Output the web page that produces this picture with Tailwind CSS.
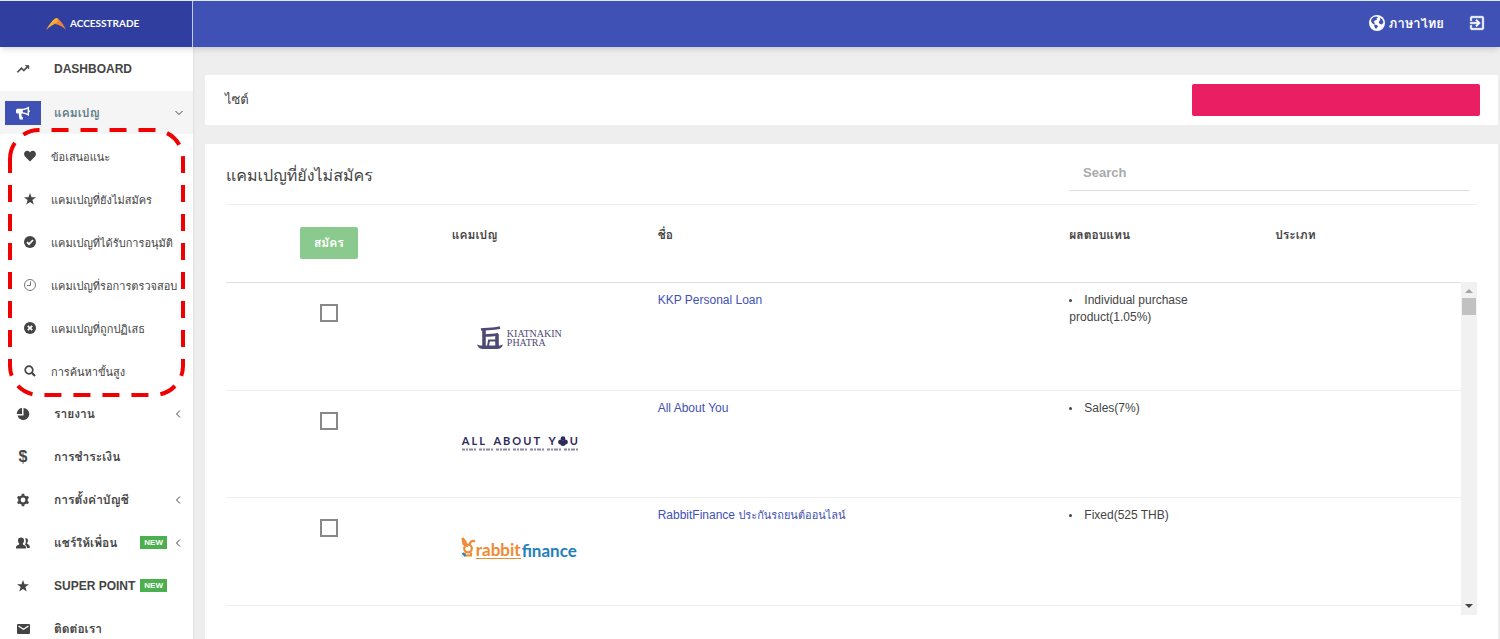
<!DOCTYPE html>
<html lang="th">
<head>
    <meta charset="UTF-8">
    <meta name="viewport" content="width=device-width, initial-scale=1.0">
    <title>ACCESSTRADE</title>
    <script src="https://cdn.jsdelivr.net/npm/@tailwindcss/browser@4"></script>
</head>
<body class="bg-[#eeeeee] font-['Liberation_Sans',Loma,'Noto_Sans_Thai_Looped',sans-serif] text-xs text-[#444] antialiased">
    <div class="flex h-screen flex-col overflow-hidden border-t border-[#dfe7f5]">

        <!-- Header -->
        <header class="relative z-10 flex h-[46px] shrink-0 bg-[#3f51b5] text-white shadow-md">
            <a href="#" class="flex w-[193px] items-center gap-1 border-r border-[#c5cae9] bg-[#303f9f] pl-[46px]">
                <svg class="h-3 w-5" viewBox="0 0 20 12">
                    <path d="M0 12C3 7 6 3 9 .6 10 -.2 11 -.2 12 .6L14 4.500C9 5 4 8 0 12z" fill="#fbb034"/>
                    <path d="M11 0c4 3 7 7 9 12-4-4-8-6-14-6.500 3 0 5-1 6-2z" fill="#f0803c"/>
                </svg>
                <span class="font-[Lato] text-[10px] font-bold">ACCESSTRADE</span>
            </a>
            <div class="flex flex-1 items-center justify-end gap-6 pr-[14px] pb-[2px]">
                <a href="#" class="flex items-center gap-1 text-[13px] font-bold">
                    <svg class="h-4 w-4" viewBox="0 0 16 16">
                        <circle cx="8" cy="8" r="8" fill="#fff"/>
                        <path d="M2.500 4l2-2 3-.5 1.500 1-1.500 1 .5 1-2 1-1.500 1.500 1.500 1-1 1.500-2-1.500L2 6zM11 2.500l2.500 2 1 3-1.800 2-2-.5-1-2 1.500-2zM5 9.500l3 .5 1 1.500-2 2.500L5.500 12z" fill="#3f51b5"/>
                    </svg>
                    <span class="pt-[2px]">ภาษาไทย</span>
                </a>
                <button type="button" aria-label="ออกจากระบบ">
                    <svg class="h-[18px] w-[18px]" viewBox="0 0 24 24" fill="#fff" stroke="#fff" stroke-width=".7"><path d="M10.090 15.590L11.500 17l5-5-5-5-1.410 1.410L12.670 11H3v2h9.670l-2.580 2.590zM19 3H5c-1.110 0-2 .9-2 2v4h2V5h14v14H5v-4H3v4c0 1.100.89 2 2 2h14c1.100 0 2-.9 2-2V5c0-1.100-.9-2-2-2z"/></svg>
                </button>
            </div>
        </header>

        <div class="flex min-h-0 flex-1">

            <!-- Sidebar -->
            <nav class="w-[193px] shrink-0 bg-white font-bold shadow">
                <a href="#" class="flex h-11 items-center">
                    <span class="ml-[5px] flex w-9 justify-center"><svg class="h-[14px] w-[14px]" viewBox="0 0 24 24" fill="#444" stroke="#444"><path d="M16 6l2.290 2.290-4.880 4.880-4-4L2 16.590 3.410 18l6-6 4 4 6.300-6.290L22 12V6z"/></svg></span>
                    <span class="ml-[13px]">DASHBOARD</span>
                </a>
                <a href="#" class="flex h-[43px] items-center bg-[#f5f5f5] text-[#607d8b]">
                    <span class="ml-[5px] flex h-6 w-9 items-center justify-center bg-[#3f51b5]"><svg class="h-[14px] w-[14px]" viewBox="0 0 14 14" fill="#fff"><path d="M13 .5v9.500C10.500 8.300 8 7.600 6 7.500c-.8.400-.8 1.200-.2 1.800-.5.800.1 1.500 1.200 2.400v1.800H3.700c-.6-1.700-1-3.600-.8-6H1.500A1.500 1.500 0 0 1 0 5.900V4.300A1.500 1.500 0 0 1 1.500 2.800H5.500C8 2.800 10.500 2 13 .5z"/><path d="M6.700 4.200C8.700 4 10.300 3.400 11.600 2.700v5C10.300 7 8.700 6.500 6.700 6.300z" fill="#3f51b5"/><circle cx="13" cy="5.200" r="1"/></svg></span>
                    <span class="ml-[13px] flex-1">แคมเปญ</span>
                    <svg class="mr-[10px] h-2 w-2" viewBox="0 0 8 8" fill="none" stroke="#444"><path d="M.5 2L4 5.500 7.500 2"/></svg>
                </a>

                <div class="relative text-[11px] font-normal">
                    <a href="#" class="flex h-[43px] items-center">
                        <svg class="ml-6 h-3 w-3" viewBox="0 0 12 12" fill="#444"><path d="M6 11.500L1 6.500C-1 4 .5 .8 3.200 .8 4.500 .8 5.500 1.500 6 2.500 6.500 1.500 7.500 .8 8.800 .8 11.500 .8 13 4 11 6.500z"/></svg>
                        <span class="ml-[15px] pt-1">ข้อเสนอแนะ</span>
                    </a>
                    <a href="#" class="flex h-[43px] items-center">
                        <svg class="ml-6 h-3 w-3" viewBox="0 0 12 12" fill="#444"><path d="M6 0l1.500 4.300H12L8.400 7l1.300 4.600L6 8.900l-3.700 2.700L3.600 7 0 4.300h4.500z"/></svg>
                        <span class="ml-[15px] pt-1">แคมเปญที่ยังไม่สมัคร</span>
                    </a>
                    <a href="#" class="flex h-[43px] items-center">
                        <svg class="ml-6 h-3 w-3" viewBox="0 0 12 12"><circle cx="6" cy="6" r="6" fill="#444"/><path d="M3 6.200l2 2L9 4" fill="none" stroke="#fff" stroke-width="1.800"/></svg>
                        <span class="ml-[15px] pt-1 whitespace-nowrap">แคมเปญที่ได้รับการอนุมัติ</span>
                    </a>
                    <a href="#" class="flex h-[43px] items-center">
                        <svg class="ml-6 h-3 w-3" viewBox="0 0 12 12" fill="none" stroke="#777"><circle cx="6" cy="6" r="5.500"/><path d="M6.500 2.500V6.500H3"/></svg>
                        <span class="ml-[15px] pt-1 whitespace-nowrap">แคมเปญที่รอการตรวจสอบ</span>
                    </a>
                    <a href="#" class="flex h-[43px] items-center">
                        <svg class="ml-6 h-3 w-3" viewBox="0 0 12 12"><circle cx="6" cy="6" r="6" fill="#444"/><path d="M3.800 3.800l4.400 4.400M8.200 3.800L3.800 8.200" stroke="#fff" stroke-width="1.800"/></svg>
                        <span class="ml-[15px] pt-1">แคมเปญที่ถูกปฏิเสธ</span>
                    </a>
                    <a href="#" class="flex h-[43px] items-center">
                        <svg class="ml-6 h-3 w-3" viewBox="0 0 12 12" fill="none" stroke="#444"><circle cx="5" cy="5" r="3.800" stroke-width="1.700"/><path d="M7.800 7.800L11 11" stroke-width="2.200"/></svg>
                        <span class="ml-[15px] pt-1">การค้นหาขั้นสูง</span>
                    </a>
                    <!-- highlight around the submenu -->
                    <svg class="pointer-events-none absolute -top-[6px] left-[8px] h-[270px] w-[178px]" viewBox="0 0 178 270" fill="none">
                        <path d="M2 31A29 29 0 0 1 31 2H146A29 29 0 0 1 175 31V238A29 29 0 0 1 146 267H31A29 29 0 0 1 2 238z" stroke="#f00000" stroke-width="4" stroke-dasharray="17 12"/>
                    </svg>
                </div>

                <a href="#" class="flex h-[43px] items-center">
                    <span class="ml-[5px] flex w-9 justify-center"><svg class="h-[14px] w-[14px]" viewBox="0 0 14 14" fill="#444"><path d="M7.500 1a6 6 0 1 1-6 7.500H7.500z"/><path d="M6 .8V7H.8A6 6 0 0 1 6 .8z"/></svg></span>
                    <span class="ml-[13px] flex-1">รายงาน</span>
                    <svg class="mr-[11px] h-2 w-2" viewBox="0 0 8 8" fill="none" stroke="#444"><path d="M6 .5L2.500 4 6 7.500"/></svg>
                </a>
                <a href="#" class="flex h-[43px] items-center">
                    <span class="ml-[5px] flex w-9 justify-center text-base">$</span>
                    <span class="ml-[13px]">การชำระเงิน</span>
                </a>
                <a href="#" class="flex h-[43px] items-center">
                    <span class="ml-[5px] flex w-9 justify-center"><svg class="h-[14px] w-[14px]" viewBox="0 0 14 14"><circle cx="7" cy="7" r="3.600" fill="none" stroke="#444" stroke-width="2.400"/><path d="M7 .8v2M7 11.200v2M1.600 3.900l1.800 1M10.600 9.100l1.800 1M1.600 10.100l1.800-1M10.600 4.900l1.800-1" stroke="#444" stroke-width="2.600"/></svg></span>
                    <span class="ml-[13px] flex-1">การตั้งค่าบัญชี</span>
                    <svg class="mr-[11px] h-2 w-2" viewBox="0 0 8 8" fill="none" stroke="#444"><path d="M6 .5L2.500 4 6 7.500"/></svg>
                </a>
                <a href="#" class="flex h-[43px] items-center">
                    <span class="ml-[5px] flex w-9 justify-center"><svg class="h-[14px] w-[14px]" viewBox="0 0 14 14" fill="#444"><path d="M9 2.500c1.500-.6 3 .3 3 2 0 1.300-.5 2-1 2.600.2 1.500 2.500 1.500 2.800 3.400V12H11c0-1.800-.9-2.500-2-3.200C10 7 10.300 4 9 2.500z"/><path d="M5 1.500c2 0 3 1.200 3 3C8 6 7.400 7 6.700 7.700c.2 1.500 3.100 1.500 3.300 3.300v1.500H0V11C.2 9.200 3.100 9.200 3.300 7.700 2.600 7 2 6 2 4.500c0-1.800 1-3 3-3z"/></svg></span>
                    <span class="ml-[13px] flex-1">แชร์ให้เพื่อน</span>
                    <span class="bg-[#4caf50] px-1 text-[8px] leading-[13px] text-white">NEW</span>
                    <svg class="mr-[11px] ml-[7px] h-2 w-2" viewBox="0 0 8 8" fill="none" stroke="#444"><path d="M6 .5L2.500 4 6 7.500"/></svg>
                </a>
                <a href="#" class="flex h-[43px] items-center">
                    <span class="ml-[5px] flex w-9 justify-center"><svg class="h-3 w-3" viewBox="0 0 12 12" fill="#444"><path d="M6 0l1.500 4.300H12L8.400 7l1.300 4.600L6 8.900l-3.700 2.700L3.600 7 0 4.300h4.500z"/></svg></span>
                    <span class="ml-[13px] flex-1 whitespace-nowrap">SUPER POINT</span>
                    <span class="mr-[26px] bg-[#4caf50] px-1 text-[8px] leading-[13px] text-white">NEW</span>
                </a>
                <a href="#" class="flex h-[43px] items-center">
                    <span class="ml-[5px] flex w-9 justify-center"><svg class="h-[10px] w-[13px]" viewBox="0 0 13 10"><rect width="13" height="10" rx="1" fill="#444"/><path d="M1.500 2l5 3.300 5-3.300" fill="none" stroke="#fff" stroke-width="1.200"/></svg></span>
                    <span class="ml-[13px]">ติดต่อเรา</span>
                </a>
            </nav>

            <!-- Content -->
            <main class="flex min-w-0 flex-1 flex-col pt-7 pr-[2px] pl-3">
                <section class="flex h-[50px] shrink-0 items-center justify-between bg-white pr-[18px] pl-5">
                    <h2 class="text-[13px]">ไซต์</h2>
                    <button type="button" aria-label="เลือกไซต์" class="h-8 w-72 rounded-xs bg-[#e91e63]"></button>
                </section>

                <section class="mt-[19px] flex-1 bg-white pr-[21px] pl-[21px]">
                    <div class="flex h-[61px] items-start justify-between border-b border-[#f0f0f0] pr-2">
                        <h1 class="pt-5 text-base">แคมเปญที่ยังไม่สมัคร</h1>
                        <input type="search" aria-label="Search" placeholder="Search" class="h-[47px] w-[400px] border-b border-[#dcdcdc] px-[14px] pt-[11px] text-[13px] font-bold outline-none placeholder:text-[#aaa]">
                    </div>

                    <div class="flex">
                        <table class="flex-1 table-fixed">
                            <thead>
                                <tr class="h-[77px] border-b border-[#e0e0e0] text-left align-top">
                                    <th class="w-1/6 pt-[22px] text-center"><button type="button" class="h-8 rounded-xs bg-[#8bca8e] px-[14px] text-white">สมัคร</button></th>
                                    <th class="w-1/6 px-5 pt-[22px]">แคมเปญ</th>
                                    <th class="w-1/3 px-5 pt-[22px]">ชื่อ</th>
                                    <th class="w-1/6 px-5 pt-[22px]">ผลตอบแทน</th>
                                    <th class="w-1/6 px-5 pt-[22px]">ประเภท</th>
                                </tr>
                            </thead>
                            <tbody class="leading-[17px]">
                                <tr class="h-[108px] border-b border-[#eee] align-top">
                                    <td class="pt-[21px] text-center"><input type="checkbox" aria-label="KKP Personal Loan" class="h-[18px] w-[18px] appearance-none border-2 border-[#888] bg-white"></td>
                                    <td class="px-[45px] pt-[43px]">
                                        <div class="flex items-center gap-1 text-[#4f4a75]">
                                            <svg class="h-6 w-[26px]" viewBox="0 0 26 24" fill="none" stroke="#4f4a75"><path d="M4 3.500c5-1 12 0 19-2" stroke-width="2.400"/><path d="M7 3v17" stroke-width="3.600"/><path d="M7 9.500c5 0 9 0 14-1.500" stroke-width="2.400"/><path d="M20 8v12" stroke-width="3.600"/><path d="M11 20l1-5.500h8" stroke-width="2"/><path d="M0 18.500c2 1 4 1 6 1h14c2 0 4 0 6-1-1 3-3 4.500-6 4.500H6c-3 0-5-1.500-6-4.500z" fill="#4f4a75" stroke="none"/></svg>
                                            <span class="font-['Liberation_Serif'] text-[10px] leading-[9px]">KIATNAKIN<br>PHATRA</span>
                                        </div>
                                    </td>
                                    <td class="px-5 pt-[9px]"><a href="#" class="text-[#3f51b5]">KKP Personal Loan</a></td>
                                    <td class="px-5 pt-[9px]"><ul><li class="before:mr-3 before:inline-block before:h-[3px] before:w-[3px] before:rounded-full before:bg-current before:align-middle">Individual purchase product(1.05%)</li></ul></td>
                                    <td></td>
                                </tr>
                                <tr class="h-[107px] border-b border-[#eee] align-top">
                                    <td class="pt-[21px] text-center"><input type="checkbox" aria-label="All About You" class="h-[18px] w-[18px] appearance-none border-2 border-[#888] bg-white"></td>
                                    <td class="px-[30px] pt-[43px]">
                                        <div class="flex w-[116px] items-center justify-between font-[Lato] text-[11px] leading-[14px] font-bold tracking-[2px] whitespace-nowrap text-[#2f2a5c]"><span>ALL</span><span>ABOUT</span><span class="-mr-[2px] flex items-center">Y<svg class="mr-[2px] h-[10px] w-[10px]" viewBox="0 0 10 10" fill="#2f2a5c"><circle cx="5" cy="2.500" r="2.300"/><circle cx="2.700" cy="6" r="2.500"/><circle cx="7.300" cy="6" r="2.500"/><circle cx="5" cy="7.500" r="2.500"/></svg>U</span></div>
                                        <svg class="h-[3px] w-[117px]" viewBox="0 0 117 3"><path d="M0 1.500h117" stroke="#8a87a5" stroke-width="2" stroke-dasharray="3 1 2 1 4 1 2 3"/></svg>
                                    </td>
                                    <td class="px-5 pt-[9px]"><a href="#" class="text-[#3f51b5]">All About You</a></td>
                                    <td class="px-5 pt-[9px]"><ul><li class="before:mr-3 before:inline-block before:h-[3px] before:w-[3px] before:rounded-full before:bg-current before:align-middle">Sales(7%)</li></ul></td>
                                    <td></td>
                                </tr>
                                <tr class="h-[108px] border-b border-[#eee] align-top">
                                    <td class="pt-[21px] text-center"><input type="checkbox" aria-label="RabbitFinance" class="h-[18px] w-[18px] appearance-none border-2 border-[#888] bg-white"></td>
                                    <td class="px-[29px] pt-[39px]">
                                        <div class="flex items-end font-[Lato] text-[17px] leading-[17px] font-bold">
                                            <svg class="h-[22px] w-[15px]" viewBox="0 0 15 22" fill="none" stroke="#f08a33" stroke-width="2.200"><path d="M1.500 1l1 6 3 1.500L4.500 5zM14 4.500c-3-1.500-5 0-5.500 4"/><circle cx="7" cy="11.500" r="3.800"/><path d="M4 15.500v3h6v-3"/><path d="M1.500 16l3 3" stroke="#2a86c0"/></svg>
                                            <span class="border-b border-[#f08a33] text-[#f08a33]">rabbit</span><span class="pl-px text-[#2380bd]">finance</span>
                                        </div>
                                    </td>
                                    <td class="px-5 pt-[9px]"><a href="#" class="text-[#3f51b5]">RabbitFinance <span class="text-[11px]">ประกันรถยนต์ออนไลน์</span></a></td>
                                    <td class="px-5 pt-[9px]"><ul><li class="before:mr-3 before:inline-block before:h-[3px] before:w-[3px] before:rounded-full before:bg-current before:align-middle">Fixed(525 THB)</li></ul></td>
                                    <td></td>
                                </tr>
                            </tbody>
                        </table>
                        <!-- scrollbar of the list -->
                        <div class="mt-[77px] -mb-[9px] flex w-4 flex-col items-center bg-[#f1f1f1]">
                            <svg class="h-4 w-4 shrink-0" viewBox="0 0 16 16" fill="#a3a3a3"><path d="M4 11l4-4 4 4z"/></svg>
                            <div class="h-[17px] w-[14px] bg-[#c1c1c1]"></div>
                            <svg class="mt-auto h-4 w-4 shrink-0" viewBox="0 0 16 16" fill="#444"><path d="M4 5l4 4 4-4z"/></svg>
                        </div>
                    </div>
                </section>
            </main>
        </div>
    </div>
</body>
</html>
